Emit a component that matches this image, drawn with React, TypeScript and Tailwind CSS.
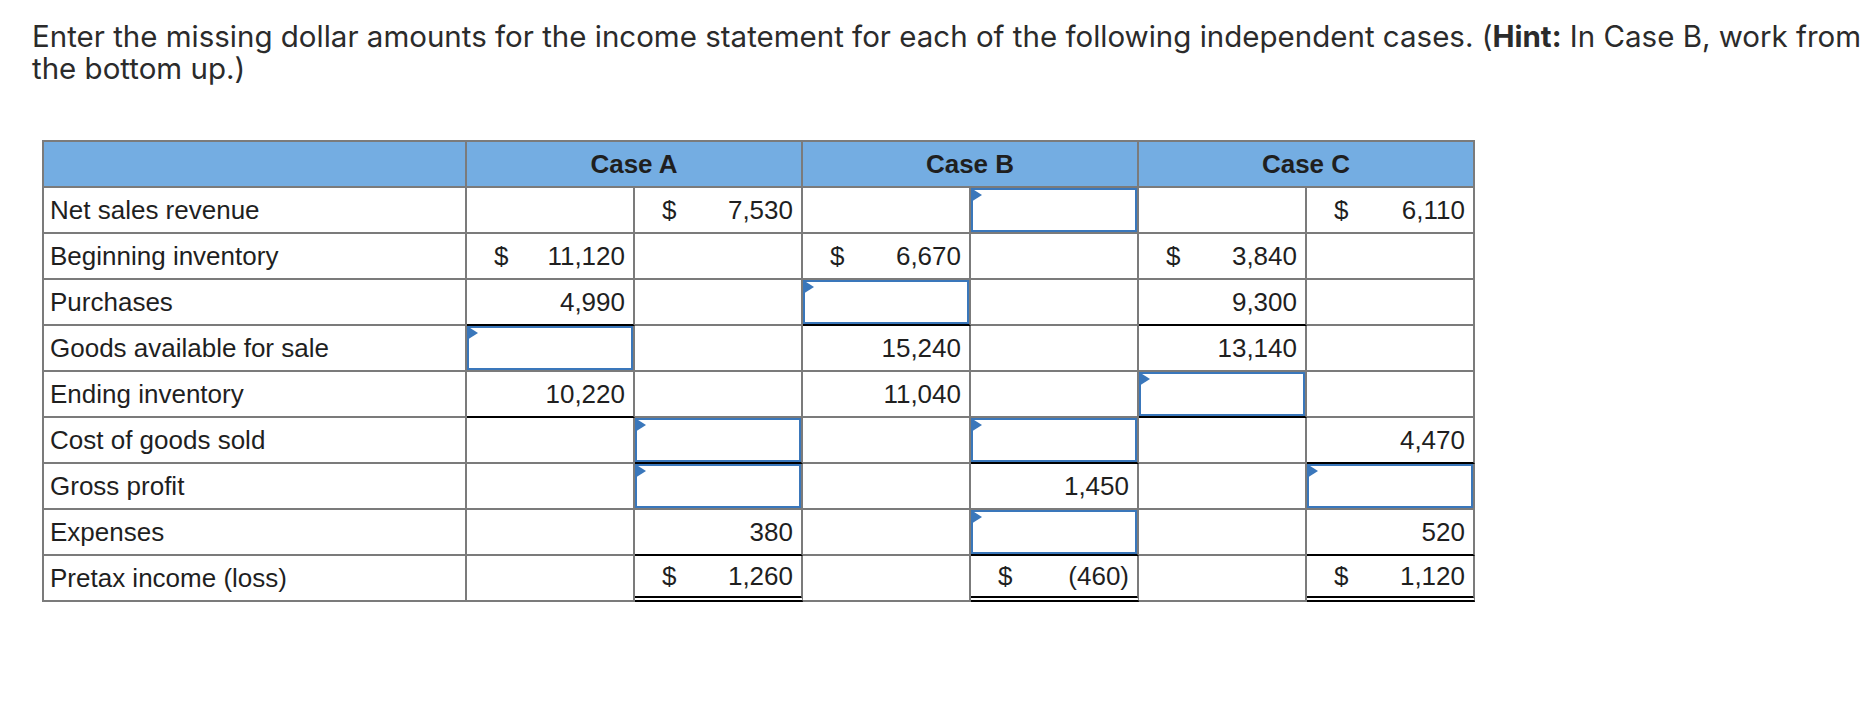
import React from 'react';

type Line = 'gray' | 'black' | 'double';

type Cell =
  | { kind: 'empty'; line?: Line }
  | { kind: 'num'; value: string; dollar?: boolean; line?: Line }
  | { kind: 'input'; line?: Line };

type Row = { label: string; cells: Cell[] };

const E: Cell = { kind: 'empty' };

const rows: Row[] = [
  {
    label: 'Net sales revenue',
    cells: [E, { kind: 'num', value: '7,530', dollar: true }, E, { kind: 'input' }, E, { kind: 'num', value: '6,110', dollar: true }],
  },
  {
    label: 'Beginning inventory',
    cells: [
      { kind: 'num', value: '11,120', dollar: true }, E,
      { kind: 'num', value: '6,670', dollar: true }, E,
      { kind: 'num', value: '3,840', dollar: true }, E,
    ],
  },
  {
    label: 'Purchases',
    cells: [
      { kind: 'num', value: '4,990', line: 'black' }, E,
      { kind: 'input', line: 'black' }, E,
      { kind: 'num', value: '9,300', line: 'black' }, E,
    ],
  },
  {
    label: 'Goods available for sale',
    cells: [{ kind: 'input' }, E, { kind: 'num', value: '15,240' }, E, { kind: 'num', value: '13,140' }, E],
  },
  {
    label: 'Ending inventory',
    cells: [{ kind: 'num', value: '10,220', line: 'black' }, E, { kind: 'num', value: '11,040' }, E, { kind: 'input', line: 'black' }, E],
  },
  {
    label: 'Cost of goods sold',
    cells: [E, { kind: 'input', line: 'black' }, E, { kind: 'input', line: 'black' }, E, { kind: 'num', value: '4,470', line: 'black' }],
  },
  {
    label: 'Gross profit',
    cells: [E, { kind: 'input' }, E, { kind: 'num', value: '1,450' }, E, { kind: 'input' }],
  },
  {
    label: 'Expenses',
    cells: [E, { kind: 'num', value: '380', line: 'black' }, E, { kind: 'input', line: 'black' }, E, { kind: 'num', value: '520', line: 'black' }],
  },
  {
    label: 'Pretax income (loss)',
    cells: [
      E, { kind: 'num', value: '1,260', dollar: true, line: 'double' },
      E, { kind: 'num', value: '(460)', dollar: true, line: 'double' },
      E, { kind: 'num', value: '1,120', dollar: true, line: 'double' },
    ],
  },
];

const lineClass = (line: Line = 'gray') =>
  line === 'black'
    ? 'border-b-2 border-b-black'
    : line === 'double'
      ? 'border-b-[6px] border-double border-b-black'
      : 'border-b-2 border-b-[#7b7b7b]';

function DataCell({ cell }: { cell: Cell }) {
  const base = `h-[46px] border-r-2 border-r-[#7b7b7b] ${lineClass(cell.line)}`;

  if (cell.kind === 'input') {
    return (
      <div className={base}>
        <div className="relative h-full w-full border-2 border-[#3a77bb] bg-white">
          <span className="absolute -left-[2px] -top-[2px] h-0 w-0 border-y-[7px] border-l-[11px] border-y-transparent border-l-[#3a77bb]" />
        </div>
      </div>
    );
  }

  if (cell.kind === 'num') {
    return (
      <div className={`${base} flex items-center justify-between pl-[27px] pr-[8px]`}>
        <span>{cell.dollar ? '$' : ''}</span>
        <span>{cell.value}</span>
      </div>
    );
  }

  return <div className={base} />;
}

export default function App() {
  return (
    <div className="min-h-screen overflow-hidden bg-white">
      <div className="pl-[32px] pt-[20px] font-['Inter',sans-serif] text-[29.5px] leading-[32px] text-[#2b2b2b]">
        <p className="whitespace-nowrap">
          Enter the missing dollar amounts for the income statement for each of the following independent cases. (
          <span className="font-bold">Hint:</span> In Case B, work from
        </p>
        <p>the bottom up.)</p>
      </div>

      <div className="ml-[42px] mt-[56px] grid w-[1433px] grid-cols-[423px_repeat(6,168px)] border-l-2 border-t-2 border-[#7b7b7b] font-['Liberation_Sans',Arial,sans-serif] text-[26px] text-[#1f1f1f]">
        {/* header */}
        <div className="h-[46px] border-b-2 border-r-2 border-[#7b7b7b] bg-[#74ade2]" />
        {['Case A', 'Case B', 'Case C'].map((c) => (
          <div
            key={c}
            className="col-span-2 flex h-[46px] items-center justify-center border-b-2 border-r-2 border-[#7b7b7b] bg-[#74ade2] font-bold"
          >
            {c}
          </div>
        ))}

        {rows.map((r) => (
          <React.Fragment key={r.label}>
            <div className="flex h-[46px] items-center border-b-2 border-r-2 border-[#7b7b7b] pl-[6px]">
              {r.label}
            </div>
            {r.cells.map((cell, i) => (
              <DataCell key={i} cell={cell} />
            ))}
          </React.Fragment>
        ))}
      </div>
    </div>
  );
}
